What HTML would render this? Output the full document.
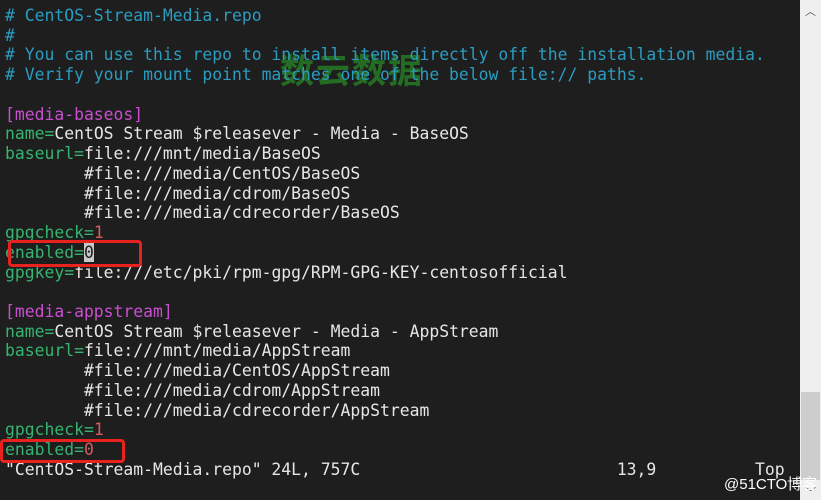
<!DOCTYPE html>
<html><head><meta charset="utf-8"><style>
html,body{margin:0;padding:0;}
body{width:821px;height:500px;background:#1e1e1e;overflow:hidden;position:relative;}
pre{margin:0;position:absolute;left:5px;top:6px;font-family:"DejaVu Sans Mono","Liberation Mono",monospace;font-size:16.4px;line-height:19.74px;color:#e6e6e6;}
.c{color:#2b9cc0}.s{color:#c94fd0}.k{color:#35b56f}.n{color:#d85a5a}
.cur{background:#c8c8c8;color:#1e1e1e}
.box{position:absolute;border:3px solid #e8231f;border-radius:4px;}
.sb{position:absolute;left:800px;top:0;width:21px;height:500px;background:#efefef;}
.th{position:absolute;left:801px;top:392px;width:19px;height:88px;background:#cdcdcd;}
.wm{position:absolute;left:280px;top:44px;font-family:"Noto Sans CJK SC",sans-serif;font-weight:bold;font-size:34px;color:rgba(40,160,40,0.6);letter-spacing:2px;}
.mark{position:absolute;left:724px;top:473px;font-family:"Liberation Sans","Noto Sans CJK SC",sans-serif;font-size:15px;color:#fff;}
.ar{position:absolute;left:805px;color:#555;font-family:"DejaVu Sans",sans-serif;font-size:11px;}
</style></head><body>
<div class="wm">数云数据</div>
<pre><span class="c"># CentOS-Stream-Media.repo
#
# You can use this repo to install items directly off the installation media.
# Verify your mount point matches one of the below file:// paths.</span>

<span class="s">[media-baseos]</span>
<span class="k">name=</span>CentOS Stream $releasever - Media - BaseOS
<span class="k">baseurl=</span>file:///mnt/media/BaseOS
        #file:///media/CentOS/BaseOS
        #file:///media/cdrom/BaseOS
        #file:///media/cdrecorder/BaseOS
<span class="k">gpgcheck=</span><span class="n">1</span>
<span class="k">enabled=</span><span class="cur">0</span>
<span class="k">gpgkey=</span>file:///etc/pki/rpm-gpg/RPM-GPG-KEY-centosofficial

<span class="s">[media-appstream]</span>
<span class="k">name=</span>CentOS Stream $releasever - Media - AppStream
<span class="k">baseurl=</span>file:///mnt/media/AppStream
        #file:///media/CentOS/AppStream
        #file:///media/cdrom/AppStream
        #file:///media/cdrecorder/AppStream
<span class="k">gpgcheck=</span><span class="n">1</span>
<span class="k">enabled=</span><span class="n">0</span>
"CentOS-Stream-Media.repo" 24L, 757C                          13,9          Top</pre>
<div class="box" style="left:8px;top:240px;width:128px;height:21px;"></div>
<div class="box" style="left:0px;top:439px;width:119px;height:18px;"></div>
<div class="sb"></div><div class="th"></div>
<div class="ar" style="top:3px;">︿</div>
<div class="ar" style="top:484px;">﹀</div>
<div class="mark">@51CTO博客</div>
</body></html>
